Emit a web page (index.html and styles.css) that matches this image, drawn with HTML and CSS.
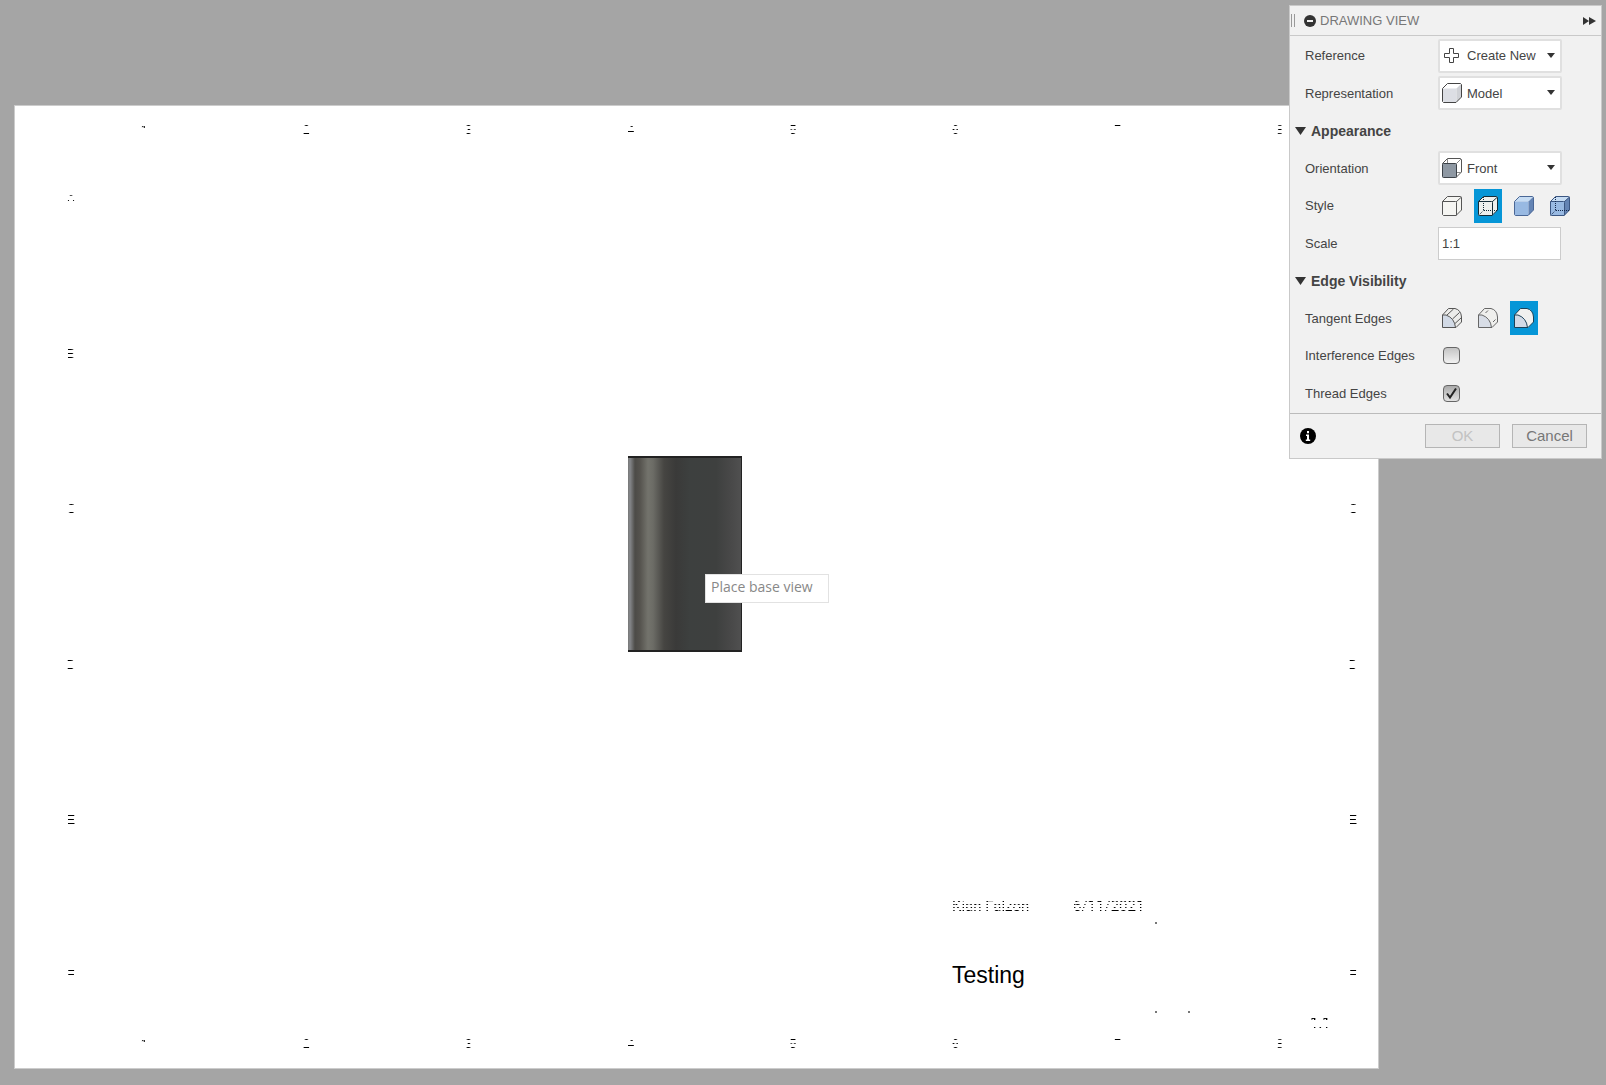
FILE: index.html
```html
<!DOCTYPE html>
<html lang="en">
<head>
<meta charset="utf-8">
<title>Drawing View</title>
<link rel="stylesheet" href="styles.css">
</head>
<body>
<main class="canvas">
  <section class="sheet" aria-label="Drawing sheet">
    <div class="zones zones-top"><span class="one">1</span><span class="two">2</span><span>3</span><span class="four">4</span><span>5</span><span>6</span><span class="seven">7</span><span>8</span></div>
    <div class="zones zones-left"><span class="four">A</span><span>B</span><span class="two">C</span><span class="two">D</span><span>E</span><span class="eff">F</span></div>
    <div class="zones zones-right"><span></span><span></span><span class="two">C</span><span class="two">D</span><span>E</span><span class="eff">F</span></div>
    <div class="zones zones-bottom"><span class="one">1</span><span class="two">2</span><span>3</span><span class="four">4</span><span>5</span><span>6</span><span class="seven">7</span><span>8</span></div>
    <div class="title-block">
      <div class="title-row faint"><span class="author">Kian Falzon</span><span>6/11/2021</span></div>
      <div class="ticks"><i></i></div>
      <div class="title-name">Testing</div>
      <div class="ticks"><i></i><i></i></div>
      <div class="title-scale">1:1</div>
    </div>
  </section>
  <div class="base-view"></div>
  <div class="tooltip" role="tooltip">Place base view</div>
</main>

<form class="panel">
  <header class="panel-head">
    <span class="grip"></span>
    <svg class="collapse" viewBox="0 0 12 12"><circle cx="6" cy="6" r="6" fill="#333"/><path d="M3 6h6" stroke="#f1f1f1" stroke-width="2"/></svg>
    <h1>DRAWING VIEW</h1>
    <svg class="forward" viewBox="0 0 13 8"><path d="M0 0l6 4-6 4zM6 0l7 4-7 4z" fill="#333"/></svg>
  </header>
  <div class="panel-body">
    <div class="row">
      <label for="reference">Reference</label>
      <div class="drop">
        <svg class="icon" viewBox="0 0 20 20"><path d="M7.500 2.500h4v5h5v4h-5v5h-4v-5h-5v-4h5z" fill="#fff" stroke="#444"/></svg>
        <select id="reference"><option>Create New</option></select>
        <svg class="arrow" viewBox="0 0 8 5"><path d="M0 0h8l-4 5z"/></svg>
      </div>
    </div>
    <div class="row">
      <label for="representation">Representation</label>
      <div class="drop">
        <svg class="icon" viewBox="0 0 20 20"><path d="M.5 5.500l5-5h13l1 1v12.500l-5.500 5.500H1.500l-1-1z" fill="#fff"/><path d="M1 5.500h13.500v13.500H2l-1-1z" fill="#dcdee4"/><path d="M14.500 5.500L19 1v13l-4.500 5z" fill="#cfd1d6"/><path d="M.5 5.500l5-5h13l1 1v12.500l-5.500 5.500H1.500l-1-1z" fill="none" stroke="#444"/></svg>
        <select id="representation"><option>Model</option></select>
        <svg class="arrow" viewBox="0 0 8 5"><path d="M0 0h8l-4 5z"/></svg>
      </div>
    </div>
    <h2><svg viewBox="0 0 11 8"><path d="M0 0h11l-5.500 8z"/></svg>Appearance</h2>
    <div class="row">
      <label for="orientation">Orientation</label>
      <div class="drop">
        <svg class="icon" viewBox="0 0 20 20"><path d="M.5 5.500l5-5h13l1 1v12.500l-5.500 5.500z" fill="#fff" stroke="#555"/><path d="M5.500 1v4M14.500 5.500l4.500-4.500M15 14.500h4" stroke="#888" fill="none"/><rect x=".5" y="5.500" width="14" height="14" rx="1" fill="#8e98a3" stroke="#3c4248"/></svg>
        <select id="orientation"><option>Front</option></select>
        <svg class="arrow" viewBox="0 0 8 5"><path d="M0 0h8l-4 5z"/></svg>
      </div>
    </div>
    <div class="row" role="radiogroup" aria-label="Style">
      <span class="name">Style</span>
      <div class="choices">
        <label class="choice"><input type="radio" name="style" aria-label="Visible edges"><svg class="icon" viewBox="0 0 20 20"><path d="M.5 5.500l5-5h14v13.500l-5 5.500H.5z" fill="#f5f5f2"/><path d="M.5 5.500l5-5h13l1 1v12.500l-5.500 5.500H1.500l-1-1zM.5 5.500h13l1 1v13M14 6l5.500-5" fill="none" stroke="#555"/></svg></label>
        <label class="choice"><input type="radio" name="style" aria-label="Visible and hidden edges" checked><svg class="icon" viewBox="0 0 20 20"><path d="M.5 5.500l5-5h14v13.500l-5 5.500H.5z" fill="#eef0ee"/><path d="M.5 5.500l5-5h13l1 1v12.500l-5.500 5.500H1.500l-1-1zM.5 5.500h13l1 1v13M14 6l5.500-5" fill="none" stroke="#142c38"/><path d="M5.500 1v13.500h14M5.500 14.500l-5 5" fill="none" stroke="#142c38" stroke-dasharray="1 1"/></svg></label>
        <label class="choice"><input type="radio" name="style" aria-label="Shaded"><svg class="icon" viewBox="0 0 20 20"><path d="M.5 5.500l5-5h14l-5 5z" fill="#c6dcf3"/><path d="M.5 5.500h14v14H.5z" fill="#98b9e2"/><path d="M14.500 5.500l5-5v13.500l-5 5.500z" fill="#6484b4"/><path d="M.5 5.500l5-5h13l1 1v12.500l-5.500 5.500H1.500l-1-1z" fill="none" stroke="#4a6796"/></svg></label>
        <label class="choice"><input type="radio" name="style" aria-label="Shaded with hidden edges"><svg class="icon" viewBox="0 0 20 20"><path d="M.5 5.500l5-5h14l-5 5z" fill="#c6dcf3"/><path d="M.5 5.500h14v14H.5z" fill="#98b9e2"/><path d="M14.500 5.500l5-5v13.500l-5 5.500z" fill="#6484b4"/><path d="M.5 5.500l5-5h13l1 1v12.500l-5.500 5.500H1.500l-1-1zM.5 5.500h13l1 1v13M14 6l5.500-5" fill="none" stroke="#3b5682"/><path d="M5.500 1v13.500h14M5.500 14.500l-5 5" fill="none" stroke="#14284a" stroke-dasharray="1 1"/></svg></label>
      </div>
    </div>
    <div class="row">
      <label for="scale">Scale</label>
      <input class="scale" id="scale" type="text" value="1:1">
    </div>
    <h2><svg viewBox="0 0 11 8"><path d="M0 0h11l-5.500 8z"/></svg>Edge Visibility</h2>
    <div class="row" role="radiogroup" aria-label="Tangent Edges">
      <span class="name">Tangent Edges</span>
      <div class="choices">
        <label class="choice"><input type="radio" name="tangent" aria-label="Full length"><svg class="icon" viewBox="0 0 20 20"><path d="M.5 7l6-6.500H13q6 1.500 6.500 8.500v5L14 19.500H.5z" fill="#ececea"/><path d="M.5 7H4q8.500 3 9.500 12.500H.5z" fill="#d2dae6"/><path d="M.5 7l6-6.500H13q6 1.500 6.500 8.500v5L14 19.500H.5zM.5 7H4q8.500 3 9.500 12.500M5 7l6.500-6M10.500 11l7-6.500M13 15.500l6.500-6" fill="none" stroke="#555"/></svg></label>
        <label class="choice"><input type="radio" name="tangent" aria-label="Shortened"><svg class="icon" viewBox="0 0 20 20"><path d="M.5 7l6-6.500H13q6 1.500 6.500 8.500v5L14 19.500H.5z" fill="#efefed"/><path d="M.5 7H4q8.500 3 9.500 12.500H.5z" fill="#d8dde6"/><path d="M.5 7l6-6.500H13q6 1.500 6.500 8.500v5L14 19.500H.5zM.5 7H4q8.500 3 9.500 12.500M7.500 5L10 2.500M15 14l2.500-2.500" fill="none" stroke="#666"/></svg></label>
        <label class="choice"><input type="radio" name="tangent" aria-label="Off" checked><svg class="icon" viewBox="0 0 20 20"><path d="M.5 7l6-6.500H13q6 1.500 6.500 8.500v5L14 19.500H.5z" fill="#f1f1ef"/><path d="M.5 7H4q8.500 3 9.500 12.500H.5z" fill="#d2dae6"/><path d="M.5 7l6-6.500H13q6 1.500 6.500 8.500v5L14 19.500H.5zM.5 7H4q8.500 3 9.500 12.500" fill="none" stroke="#1b4258"/></svg></label>
      </div>
    </div>
    <div class="row">
      <label for="interference">Interference Edges</label>
      <div class="check"><input id="interference" type="checkbox"></div>
    </div>
    <div class="row">
      <label for="thread">Thread Edges</label>
      <div class="check"><input id="thread" type="checkbox" checked><svg viewBox="0 0 17 17"><path d="M4 8.500l3 4L13 3.500" fill="none" stroke="#222" stroke-width="2"/></svg></div>
    </div>
  </div>
  <footer class="panel-foot">
    <svg class="info" viewBox="0 0 16 16"><circle cx="8" cy="8" r="8" fill="#000"/><path d="M7 3h2v2.200H7zM6 6.500h3v5h1.200V13H5.800v-1.500H7V8H6z" fill="#fff"/></svg>
    <button type="button" disabled>OK</button>
    <button type="button">Cancel</button>
  </footer>
</form>
</body>
</html>
```

FILE: styles.css
```css
* { box-sizing: border-box; }

body {
  margin: 0;
  background: #a5a5a5;
  font-family: "Liberation Sans", Arial, sans-serif;
  font-size: 13px;
  color: #444;
}

.canvas {
  position: relative;
  padding: 105px 227px 16px 14px;
}

/* Drawing sheet: every layer shares the same grid cell */
.sheet {
  display: grid;
  grid-template: 1fr / 1fr;
  aspect-ratio: 1365 / 964;
  background: #fff;
  border: 1px solid #ccc;
  color: #000;
}

.zones {
  grid-area: 1 / 1;
  display: grid;
  justify-items: center;
  align-items: center;
  font-size: 12px;
  line-height: 14px;
}

.zones-top,
.zones-bottom {
  grid-template-columns: repeat(8, 1fr);
  height: 48px;
  padding: 0 17px 0 48px;
}

.zones-top { align-self: start; }
.zones-bottom { align-self: end; }

.zones-left,
.zones-right {
  grid-template-rows: repeat(6, 1fr);
  width: 16px;
  padding: 15px 0;
}

.zones-left { justify-self: start; margin-left: 48px; }
.zones-right { justify-self: end; margin-right: 17px; }

/* Hairline strokes survive only on a few scan lines */
.zones span {
  mask-image: linear-gradient(transparent 2px, #000 2px 3px, transparent 3px 6px, #000 6px 7px, transparent 7px 10px, #000 10px 11px, transparent 11px);
}

.zones .one {
  mask-image: linear-gradient(transparent 3px, #000 3px 5px, transparent 5px);
}

.zones .two {
  mask-image: linear-gradient(transparent 2px, #000 2px 3px, transparent 3px 10px, #000 10px 11px, transparent 11px);
}

.zones .four {
  mask-image: linear-gradient(transparent 3px, #000 3px 4px, transparent 4px 8px, #000 8px 9px, transparent 9px);
}

.zones .seven {
  mask-image: linear-gradient(transparent 2px, #000 2px 3px, transparent 3px);
}

.zones .eff {
  mask-image: linear-gradient(transparent 2px, #000 2px 3px, transparent 3px 6px, #000 6px 7px, transparent 7px);
}

.title-block {
  grid-area: 1 / 1;
  align-self: end;
  justify-self: end;
  width: 426px;
  padding-bottom: 35px;
  font-size: 15px;
  line-height: 20px;
}

.title-row { display: flex; }
.author { width: 121px; }

.faint,
.title-scale { font-family: Roboto, sans-serif; }

.faint {
  mask-image: linear-gradient(transparent 5px, #000 5px 6px, transparent 6px 8px, #000 8px 9px, transparent 9px 11px, #000 11px 12px, transparent 12px 14px, #000 14px 15px, transparent 15px);
}

.ticks {
  display: flex;
  gap: 31px;
  padding: 6px 0 0 203px;
}

.ticks i {
  width: 2px;
  height: 2px;
  background: #777;
}

.title-name {
  padding: 36px 0 15px;
  font-size: 23px;
  line-height: 30px;
}

.title-scale {
  padding-left: 358px;
  mask-image: linear-gradient(transparent 5px, #000 5px 7px, transparent 7px 14px, #000 14px 15px, transparent 15px);
}

/* Part being placed on the sheet */
.base-view {
  position: absolute;
  left: 628px;
  top: 456px;
  width: 114px;
  height: 196px;
  border: solid #222;
  border-width: 2px 1px 2px 0;
  background: linear-gradient(90deg, #777 0, #85878a 2px, #4c4b47 7px, #55534e 12px, #73736c 20px, #6c6c66 25px, #464542 36px, #3a3a39 48px, #3d403f 62px, #3e403f 88px, #484848 102px, #505050 113px);
}

.tooltip {
  position: absolute;
  left: 705px;
  top: 574px;
  width: 124px;
  height: 29px;
  padding: 0 5px;
  border: 1px solid #e2e2e2;
  background: #fff;
  color: #888;
  font: 14px/23px "Open Sans", sans-serif;
  white-space: nowrap;
}

/* Floating command dialog */
.panel {
  position: absolute;
  top: 5px;
  right: 4px;
  width: 313px;
  border: 1px solid #c9c9c9;
  background: #f1f1f1;
}

.panel-head {
  display: flex;
  align-items: center;
  height: 30px;
  padding-right: 5px;
  border-bottom: 1px solid #c9c9c9;
}

.grip {
  width: 4px;
  height: 13px;
  margin: 0 9px 0 1px;
  border: solid #999;
  border-width: 0 1px;
}

.collapse { width: 12px; height: 12px; }
.forward { width: 13px; height: 8px; }

h1 {
  flex: 1;
  margin: 0 0 0 4px;
  color: #777;
  font-size: 13px;
  font-weight: normal;
}

.panel-body {
  display: grid;
  grid-template-rows: repeat(10, 1fr);
  height: 377px;
  padding: 1px 0;
}

.row {
  display: grid;
  grid-template-columns: 133px 1fr;
  align-items: center;
  padding-left: 15px;
}

h2 {
  display: flex;
  align-items: center;
  gap: 5px;
  margin: 0;
  padding-left: 5px;
  font-size: 14px;
}

h2 svg { width: 11px; height: 8px; fill: #333; }

.icon { width: 20px; height: 20px; }

.drop {
  position: relative;
  width: 124px;
}

.drop select {
  display: block;
  width: 100%;
  height: 34px;
  padding: 0 20px 0 27px;
  appearance: none;
  border: 2px solid #e0e0e0;
  border-radius: 2px;
  background: #fff;
  color: inherit;
  font: inherit;
}

.drop .icon { position: absolute; left: 4px; top: 7px; }
.arrow { position: absolute; right: 7px; top: 14px; width: 8px; height: 5px; fill: #333; }

.choices { display: flex; gap: 8px; }

.choice {
  position: relative;
  display: grid;
  place-items: center;
  width: 28px;
  height: 34px;
}

.choice:has(:checked) { background: #0696d7; }

.choice input {
  position: absolute;
  inset: 0;
  margin: 0;
  appearance: none;
}

.scale {
  width: 123px;
  height: 33px;
  padding: 0 3px;
  border: 1px solid #ccc;
  background: #fff;
  color: #444;
  font: inherit;
}

.check {
  position: relative;
  width: 17px;
  height: 17px;
  margin-left: 5px;
}

.check input {
  display: block;
  width: 17px;
  height: 17px;
  margin: 0;
  appearance: none;
  border: 1px solid #666;
  border-radius: 4px;
  background: linear-gradient(#c4c4c4, #f2f2f2);
}

.check input:checked { background: linear-gradient(#aaa, #e2e2e2); }
.check svg { position: absolute; inset: 0; pointer-events: none; }

.panel-foot {
  display: flex;
  align-items: center;
  gap: 12px;
  height: 45px;
  padding: 0 14px 0 10px;
  border-top: 1px solid #bbb;
}

.info { width: 16px; height: 16px; margin-right: auto; }

.panel-foot button {
  width: 75px;
  height: 24px;
  padding: 0;
  border: 1px solid #b5b5b5;
  background: #e8e8e8;
  color: #777;
  font: 15px/20px "Liberation Sans", Arial, sans-serif;
}

.panel-foot button:disabled { color: #c2c2c2; }
```
